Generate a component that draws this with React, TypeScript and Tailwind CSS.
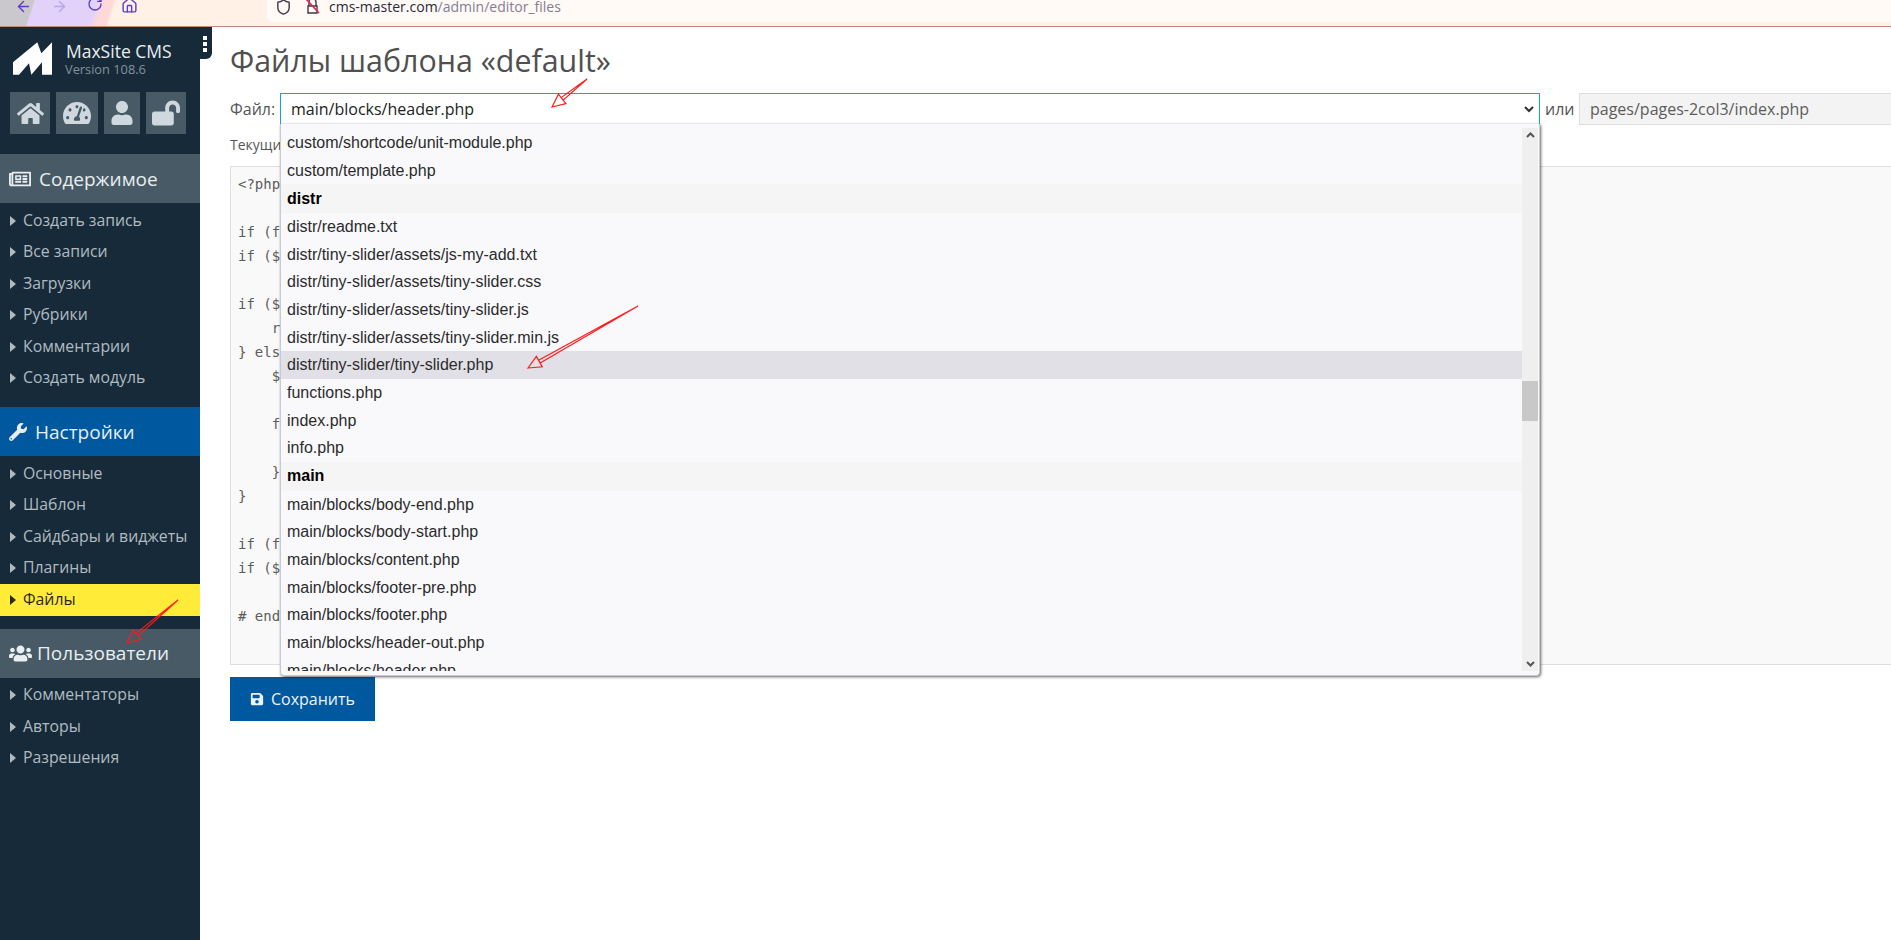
import React from 'react';
import { ArrowLeft, ArrowRight, RotateCw, House, Shield } from 'lucide-react';
import { FaHome, FaTachometerAlt, FaUser, FaLockOpen, FaRegNewspaper, FaWrench, FaUsers, FaSave } from 'react-icons/fa';

const groups = [
  {
    title: 'Содержимое',
    icon: <FaRegNewspaper className="w-[22px] h-[20px]" />,
    header: 'bg-[#475a66]',
    gap: 'gap-[8px]',
    items: ['Создать запись', 'Все записи', 'Загрузки', 'Рубрики', 'Комментарии', 'Создать модуль'],
  },
  {
    title: 'Настройки',
    icon: <FaWrench className="w-[18px] h-[18px]" />,
    header: 'bg-[#00589f]',
    gap: 'gap-[8px]',
    items: ['Основные', 'Шаблон', 'Сайдбары и виджеты', 'Плагины', 'Файлы'],
  },
  {
    title: 'Пользователи',
    icon: <FaUsers className="w-[23px] h-[23px]" />,
    header: 'bg-[#475a66]',
    gap: 'gap-[5px]',
    items: ['Комментаторы', 'Авторы', 'Разрешения'],
  },
];

const files = [
  { name: 'custom/shortcode/unit-module.php' },
  { name: 'custom/template.php' },
  { name: 'distr', group: true },
  { name: 'distr/readme.txt' },
  { name: 'distr/tiny-slider/assets/js-my-add.txt' },
  { name: 'distr/tiny-slider/assets/tiny-slider.css' },
  { name: 'distr/tiny-slider/assets/tiny-slider.js' },
  { name: 'distr/tiny-slider/assets/tiny-slider.min.js' },
  { name: 'distr/tiny-slider/tiny-slider.php', active: true },
  { name: 'functions.php' },
  { name: 'index.php' },
  { name: 'info.php' },
  { name: 'main', group: true },
  { name: 'main/blocks/body-end.php' },
  { name: 'main/blocks/body-start.php' },
  { name: 'main/blocks/content.php' },
  { name: 'main/blocks/footer-pre.php' },
  { name: 'main/blocks/footer.php' },
  { name: 'main/blocks/header-out.php' },
  { name: 'main/blocks/header.php' },
];

const code = `<?php

if (file_exists($fn)) require($fn);
if ($fn) {

if ($a) {
    return;
} else {
    $b = 1;

    foreach ($c as $d) {

    }
}

if (function_exists('f')) f();
if ($e) echo $e;

# end of file`;

function Arrow({ x1, y1, x2, y2, className }: { x1: number; y1: number; x2: number; y2: number; className: string }) {
  // двойная стрелка от руки, координаты внутри своего svg
  const a = Math.atan2(y2 - y1, x2 - x1);
  const px = Math.sin(a);
  const py = -Math.cos(a);
  const bx = x2 - Math.cos(a) * 13;
  const by = y2 - Math.sin(a) * 13;
  return (
    <svg className={className} viewBox="0 0 940 700" fill="none" stroke="#ff1a1a" strokeWidth="1.2">
      <path d={`M${x1} ${y1}L${bx + px * 1.6} ${by + py * 1.6}M${x1} ${y1}L${bx - px * 1.6} ${by - py * 1.6}`} />
      <path d={`M${x2} ${y2}L${bx + px * 6} ${by + py * 6}L${bx - px * 6} ${by - py * 6}Z`} />
    </svg>
  );
}

function TopBar() {
  return (
    <div className="h-[27px] shrink-0 border-b border-[#b8907a] bg-[#fff1e5] flex overflow-hidden">
      <div className="w-[267px] h-full flex items-start bg-[linear-gradient(108deg,#cac7cd_32px,#e2d2fa_34px,#e2d2fa_92px,#fdd9d8_100px,#fdd9d8_108px,#fff1e5_111px)] text-[#5b3fd0]">
        <ArrowLeft className="w-[17px] h-[17px] ml-[15px] -mt-[2px]" />
        <ArrowRight className="w-[17px] h-[17px] ml-[19px] -mt-[2px] text-[#b7a5ee]" />
        <RotateCw className="w-[16px] h-[16px] ml-[19px] -mt-[4px]" />
        <House className="w-[17px] h-[17px] ml-[18px] -mt-[3px]" />
      </div>
      <div className="flex-1 h-[22px] bg-[#fffaf6] rounded-bl-md flex items-start">
        <Shield className="w-[17px] h-[18px] ml-[8px] -mt-[2px] text-[#3d3a46]" />
        <svg className="w-[15px] h-[16px] ml-[13px] -mt-[2px]" viewBox="0 0 15 16" fill="none">
          <path d="M4 8V4a3.5 3.5 0 0 1 7 0v4M3 8h9v7H3z" stroke="#3d3a46" strokeWidth="1.4" />
          <path d="M1 1l13 14" stroke="#e0245e" strokeWidth="1.6" />
        </svg>
        <div className="ml-[9px] -mt-[3px] text-[14px] leading-[20px] font-['Open_Sans',sans-serif] text-[#857d95]">
          <span className="text-[#2c2838]">cms-master.com</span>/admin/editor_files
        </div>
      </div>
    </div>
  );
}

function Sidebar() {
  return (
    <aside className="relative w-[200px] shrink-0 bg-[#172a39] font-['Open_Sans',sans-serif]">
      <div className="absolute left-full top-0 w-[12px] h-[32px] bg-[#172a39] rounded-br-md flex flex-col items-center gap-[2px] pt-[9px] pr-[2px]">
        <span className="w-[4px] h-[4px] bg-white" />
        <span className="w-[4px] h-[4px] bg-white" />
        <span className="w-[4px] h-[4px] bg-white" />
      </div>

      <div className="h-[127px] pt-[15px] pl-[10px]">
        <div className="flex h-[35px]">
          <svg className="w-[39px] h-[33px] ml-[3px] shrink-0" viewBox="0 0 117 98" fill="#fff">
            <path d="M0 60L73 0L85 33L117 0V98H87V60L55 98L48 63L18 98H0Z" />
          </svg>
          <div className="ml-[14px] -mt-[2px]">
            <div className="text-[17.5px] leading-[22px] text-[#e8edf0]">MaxSite CMS</div>
            <div className="text-[12.8px] leading-[14px] text-[#83929c] -ml-[1px]">Version 108.6</div>
          </div>
        </div>
        <div className="flex gap-[6px] mt-[15px] text-[#ced8de]">
          <div className="w-[40px] h-[42px] bg-[#475a66] flex items-center justify-center">
            <FaHome className="w-[27px] h-[27px]" />
          </div>
          <div className="w-[42px] h-[42px] bg-[#475a66] flex items-center justify-center">
            <FaTachometerAlt className="w-[28px] h-[28px]" />
          </div>
          <div className="w-[36px] h-[42px] bg-[#475a66] flex items-center justify-center">
            <FaUser className="w-[24px] h-[24px]" />
          </div>
          <div className="w-[40px] h-[42px] bg-[#475a66] flex items-center justify-center">
            <FaLockOpen className="w-[28px] h-[26px]" />
          </div>
        </div>
      </div>

      {groups.map((g) => (
        <div key={g.title} className="mb-[13px]">
          <div className={`h-[49px] flex items-center pl-[9px] pt-[1px] text-[#e9eef1] text-[19px] ${g.gap} ${g.header}`}>
            {g.icon}
            <span>{g.title}</span>
          </div>
          <div className="pt-[2px]">
            {g.items.map((item) => {
              const current = item === 'Файлы';
              return (
                <div
                  key={item}
                  className={`h-[31.5px] flex items-center pl-[10px] text-[15.8px] ${current ? 'bg-[#ffeb38] text-[#2a2a1c]' : 'text-[#b0bac0]'}`}
                >
                  <span
                    className={`w-0 h-0 border-y-[5px] border-y-transparent border-l-[6px] ${current ? 'border-l-[#2a2a1c]' : 'border-l-[#b0bac0]'}`}
                  />
                  <span className="ml-[7px]">{item}</span>
                </div>
              );
            })}
          </div>
        </div>
      ))}
    </aside>
  );
}

function FileDropdown() {
  return (
    <div className="absolute -left-px -right-px top-full z-10 h-[552px] bg-[#f9f9fc] border border-t-0 border-[#c9c9d4] rounded-b shadow-[1px_1px_3px_rgba(0,0,0,0.6)] font-['Liberation_Sans',Arial,sans-serif] text-[16px] text-[#2b2b2b] flex pt-[4px] pb-[4px] pr-[1px]">
      <div className="flex-1 overflow-hidden pt-[1px]">
        {files.map((f) => (
          <div
            key={f.name}
            className={`flex items-center pl-[6px] ${f.group ? 'h-[28.6px] bg-[#f5f5f5] font-bold text-black' : 'h-[27.7px]'} ${f.active ? 'bg-[#e1e0e6]' : ''}`}
          >
            {f.name}
          </div>
        ))}
      </div>
      <div className="w-[16px] bg-[#efefef] relative flex flex-col items-center justify-between py-[4px] text-[#555]">
        <svg className="w-[9px] h-[6px]" viewBox="0 0 9 6" fill="none" stroke="currentColor" strokeWidth="2">
          <path d="M1 5l3.5-3.5L8 5" />
        </svg>
        <div className="absolute left-0 right-0 top-[253px] h-[40px] bg-[#c8c8c8]" />
        <svg className="w-[9px] h-[6px]" viewBox="0 0 9 6" fill="none" stroke="currentColor" strokeWidth="2">
          <path d="M1 1l3.5 3.5L8 1" />
        </svg>
      </div>
    </div>
  );
}

function Editor() {
  return (
    <main className="relative flex-1 min-w-0 pl-[30px] font-['Open_Sans',sans-serif] text-[#555]">
      <h1 className="text-[30.4px] leading-[40px] pt-[14px] text-[#50504f]">Файлы шаблона «default»</h1>

      <div className="flex items-center h-[32px] mt-[12px] text-[16px]">
        <span className="w-[50px]">Файл:</span>
        <div className="relative w-[1260px] h-[32px] border border-[#10a3e8] bg-white flex items-center justify-between pl-[10px] pr-[5px] text-[16px] text-[#222]">
          <span>main/blocks/header.php</span>
          <svg className="w-[10px] h-[7px] text-[#333]" viewBox="0 0 10 7" fill="none" stroke="currentColor" strokeWidth="2">
            <path d="M1 1l4 4 4-4" />
          </svg>
          <FileDropdown />
        </div>
        <span className="ml-[5px] w-[34px] text-[16px]">или</span>
        <div className="flex-1 h-[32px] bg-[#f3f3f3] border border-r-0 border-[#dedede] flex items-center pl-[10px] text-[16px] text-[#5c5c5c]">
          pages/pages-2col3/index.php
        </div>
      </div>

      <div className="mt-[11px] h-[18px] text-[14px] leading-[18px]">Текущий файл: main/blocks/header.php</div>

      <pre className="mt-[12px] h-[499px] bg-[#f9f9f9] border border-[#dedede] border-r-0 pl-[7px] pt-[5px] font-['DejaVu_Sans_Mono',monospace] text-[14px] leading-[24px] text-[#5c5c5c] overflow-hidden">
        {code}
      </pre>

      <button className="mt-[12px] w-[145px] h-[44px] bg-[#00589f] text-[#eef3f7] text-[16px] flex items-center justify-center gap-[7px]">
        <FaSave className="w-[14px] h-[14px]" />
        Сохранить
      </button>
    </main>
  );
}

export default function App() {
  return (
    <div className="relative w-full h-[940px] overflow-hidden bg-white flex flex-col">
      <TopBar />
      <div className="flex flex-1 min-h-0">
        <Sidebar />
        <Editor />
      </div>
      {/* пометки красным поверх скриншота */}
      <Arrow className="absolute left-0 top-0 w-[940px] h-[700px] z-20 pointer-events-none" x1={587} y1={79} x2={552} y2={107} />
      <Arrow className="absolute left-0 top-0 w-[940px] h-[700px] z-20 pointer-events-none" x1={638} y1={306} x2={528} y2={368} />
      <Arrow className="absolute left-0 top-0 w-[940px] h-[700px] z-20 pointer-events-none" x1={178} y1={600} x2={127} y2={643} />
    </div>
  );
}
